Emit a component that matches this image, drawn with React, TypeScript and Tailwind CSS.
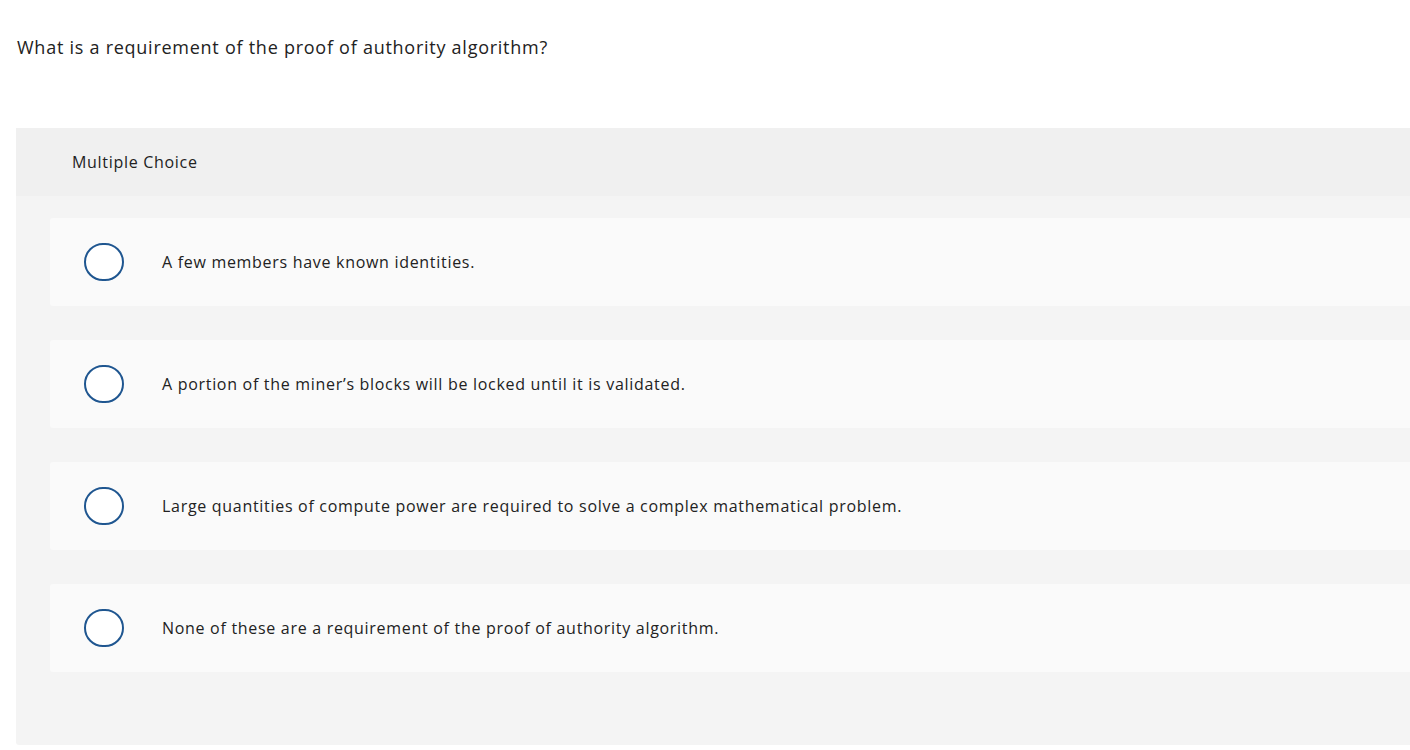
import React from 'react';

const options = [
  'A few members have known identities.',
  'A portion of the miner’s blocks will be locked until it is validated.',
  'Large quantities of compute power are required to solve a complex mathematical problem.',
  'None of these are a requirement of the proof of authority algorithm.',
];

export default function App() {
  return (
    <div className="min-h-[750px] overflow-hidden bg-white font-['Open_Sans',sans-serif] text-[#222]">
      <div className="px-[17px] pt-[36px] text-[18px] leading-[22px] tracking-[0.74px]">
        What is a requirement of the proof of authority algorithm?
      </div>

      <div className="ml-4 mt-[70px] w-[1420px] rounded-bl-[3px] bg-[#f4f4f4] pb-[73px]">
        <div className="flex h-[68px] items-center bg-[#f0f0f0] pl-[56px] text-[16px] tracking-[0.7px]">
          Multiple Choice
        </div>

        <div className="flex flex-col gap-[34px] pl-[34px] pt-[22px]">
          {options.map((opt) => (
            <div
              key={opt}
              className="flex h-[88px] items-center rounded-l-[3px] bg-[#fafafa]"
            >
              <div className="ml-[34px] h-[38px] w-[40px] shrink-0 rounded-full border-2 border-[#1f5690] bg-white" />
              <div className="ml-[38px] text-[16px] tracking-[0.7px]">{opt}</div>
            </div>
          ))}
        </div>
      </div>
    </div>
  );
}
